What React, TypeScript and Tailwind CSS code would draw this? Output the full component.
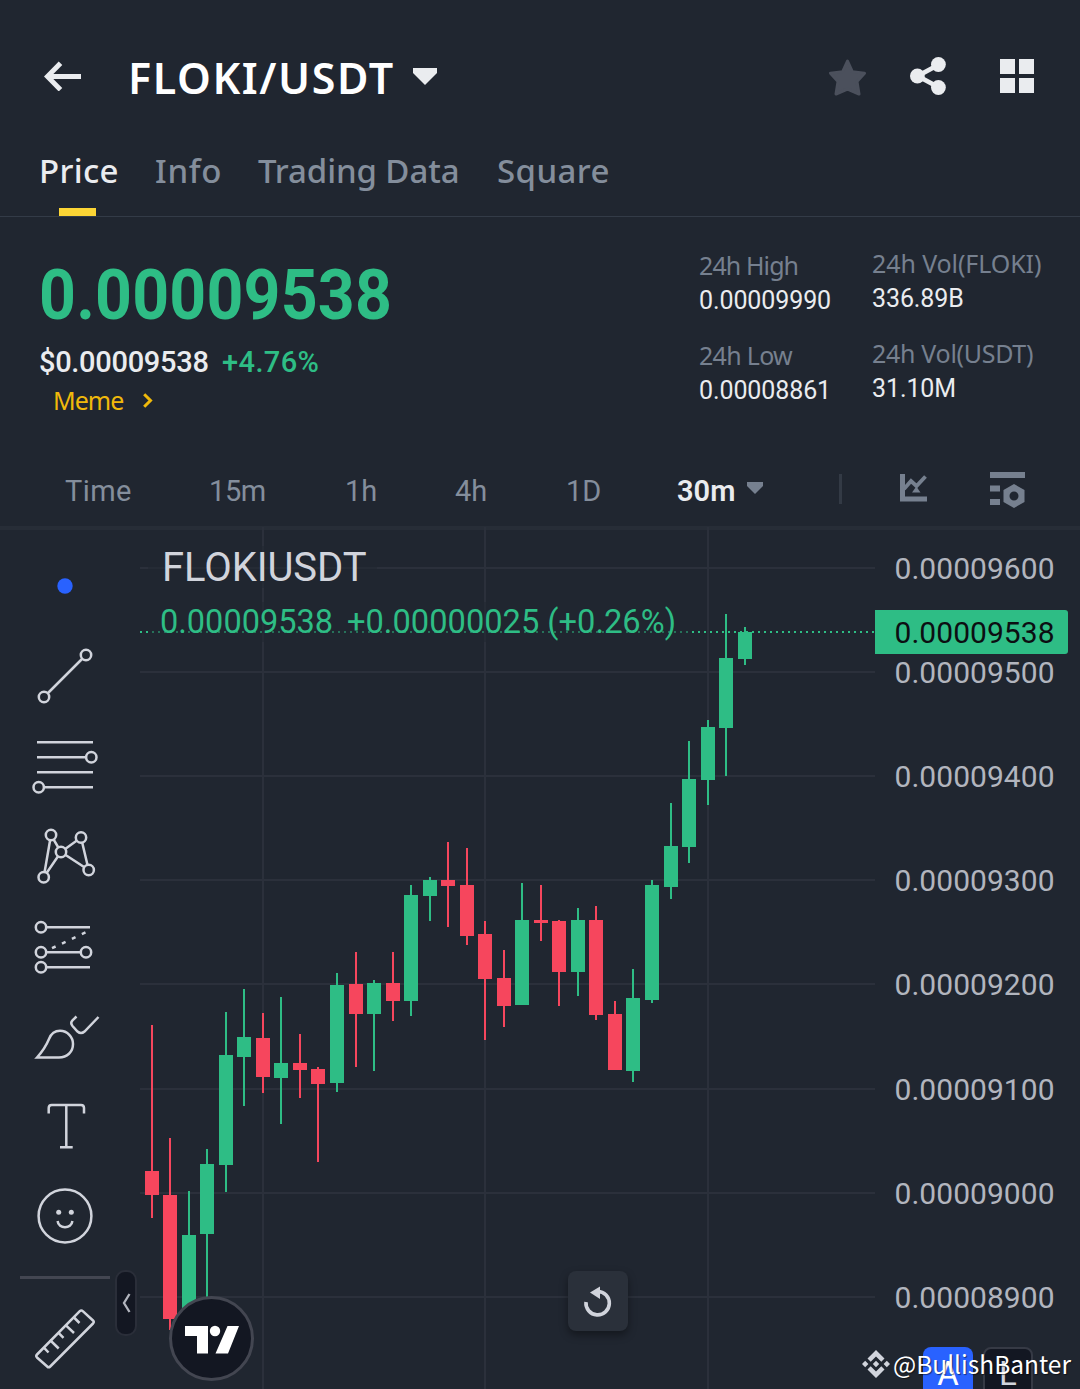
import type { ReactNode } from 'react';
import clsx from 'clsx';

type Candle = {
    x: number;
    open: number;
    close: number;
    high: number;
    low: number;
    up: boolean;
};

const UP = '#2ebd85';
const DOWN = '#f6465d';
const CHART_TOP = 530;

// x, body top, body bottom, wick top, wick bottom, rising
const rows: [number, number, number, number, number, boolean][] = [
    [145, 1171, 1195, 1025, 1218, false],
    [163, 1195, 1319, 1138, 1330, false],
    [182, 1235, 1330, 1191, 1340, true],
    [200, 1164, 1234, 1149, 1300, true],
    [219, 1055, 1165, 1012, 1192, true],
    [237, 1037, 1057, 989, 1106, true],
    [256, 1038, 1077, 1013, 1093, false],
    [274, 1063, 1078, 997, 1124, true],
    [293, 1063, 1070, 1034, 1098, false],
    [311, 1069, 1084, 1067, 1162, false],
    [330, 985, 1083, 973, 1092, true],
    [349, 984, 1014, 952, 1067, false],
    [367, 983, 1014, 980, 1071, true],
    [386, 983, 1001, 952, 1021, false],
    [404, 895, 1001, 885, 1016, true],
    [423, 880, 896, 877, 921, true],
    [441, 880, 886, 842, 927, false],
    [460, 885, 936, 848, 945, false],
    [478, 934, 979, 921, 1040, false],
    [497, 978, 1006, 950, 1027, false],
    [515, 920, 1005, 883, 1005, true],
    [534, 920, 923, 885, 941, false],
    [552, 921, 972, 920, 1006, false],
    [571, 920, 972, 908, 996, true],
    [589, 920, 1015, 906, 1020, false],
    [608, 1014, 1070, 1001, 1070, false],
    [626, 998, 1071, 969, 1082, true],
    [645, 885, 1000, 880, 1003, true],
    [664, 846, 887, 803, 899, true],
    [682, 779, 847, 741, 863, true],
    [701, 727, 780, 720, 805, true],
    [719, 658, 728, 614, 776, true],
    [738, 632, 659, 627, 665, true],
];

const candles: Candle[] = rows.map(([x, open, close, high, low, up]) => ({ x, open, close, high, low, up }));

const priceLevels = [
    { y: 568, label: '0.00009600' },
    { y: 672, label: '0.00009500' },
    { y: 776, label: '0.00009400' },
    { y: 880, label: '0.00009300' },
    { y: 984, label: '0.00009200' },
    { y: 1089, label: '0.00009100' },
    { y: 1193, label: '0.00009000' },
    { y: 1297, label: '0.00008900' },
];

const tabs = [
    { name: 'Price', className: 'w-[116px] tracking-[0.3px]' },
    { name: 'Info', className: 'w-[103px] tracking-[0.7px]' },
    { name: 'Trading Data', className: 'w-[239px] tracking-[-0.1px]' },
    { name: 'Square', className: 'w-[120px] tracking-[0.4px]' },
];

const intervals = [
    { name: 'Time', className: 'w-[144px] tracking-[0.4px]' },
    { name: '15m', className: 'w-[136px] tracking-[-0.4px]' },
    { name: '1h', className: 'w-[110px]' },
    { name: '4h', className: 'w-[111px]' },
    { name: '1D', className: 'w-[110px]' },
];

function Stat({ label, value, className }: { label: string; value: string; className: string }) {
    return (
        <div className="flex h-[90px] flex-col whitespace-nowrap">
            <span className={clsx("font-['Noto_Sans'] text-[25px] leading-[34px] text-[#76808f]", className)}>{label}</span>
            <span className="pt-[2px] font-['Roboto'] text-[25px] leading-[34px] tracking-[-0.1px] text-[#eaecef]">{value}</span>
        </div>
    );
}

function Tool({ children }: { children: ReactNode }) {
    return (
        <svg className="size-[90px] shrink-0" viewBox="0 0 90 90" fill="none" stroke="#d1d4dc" strokeWidth="2.5">
            {children}
        </svg>
    );
}

function Knobs({ points }: { points: [number, number][] }) {
    return (
        <>
            {points.map(([cx, cy]) => (
                <circle key={`${cx}-${cy}`} cx={cx} cy={cy} r="5.2" fill="#202630" />
            ))}
        </>
    );
}

function Header() {
    return (
        <header className="flex h-[152px] items-center pl-[44px] pr-[46px]">
            <svg className="h-[30px] w-[37px]" viewBox="0 0 37 30" fill="none" stroke="#eaecef" strokeWidth="5">
                <path d="M37 15.5H4M16.5 2.3 3.4 15.5 16.5 28.7" />
            </svg>
            <h1 className="ml-[47px] mt-[2px] w-[285px] whitespace-nowrap font-['Noto_Sans'] text-[43px] font-semibold leading-none tracking-[1.6px] text-white">
                FLOKI/USDT
            </h1>
            <svg className="h-[17px] w-6" viewBox="0 0 24 17" fill="#eaecef">
                <path d="M0 0H24V5L12 17 0 5Z" />
            </svg>
            <div className="ml-auto flex items-center">
                <svg className="mt-[2px] h-[39px] w-[38px]" viewBox="0 0 38 39" fill="#4b505c" stroke="#4b505c" strokeWidth="3" strokeLinejoin="round">
                    <path d="M18.500 3 23.300 13.700 35.500 15.200 28 23.500 30 36 18.500 31 7 36 9 23.500 1.500 15.200 13.700 13.700Z" />
                </svg>
                <svg className="ml-[43px] h-[38px] w-[37px]" viewBox="0 0 37 38" fill="#eaecef">
                    <path d="M29 7.5 7.8 19 29 30.5" fill="none" stroke="#eaecef" strokeWidth="4.8" />
                    <circle cx="28.400" cy="7.5" r="7.4" />
                    <circle cx="7.4" cy="19" r="7.4" />
                    <circle cx="28.400" cy="30.5" r="7.4" />
                </svg>
                <div className="ml-[53px] grid grid-cols-2 gap-1">
                    <i className="size-[15px] bg-[#eaecef]" />
                    <i className="size-[15px] bg-[#eaecef]" />
                    <i className="size-[15px] bg-[#eaecef]" />
                    <i className="size-[15px] bg-[#eaecef]" />
                </div>
            </div>
        </header>
    );
}

function Tabs() {
    return (
        <nav className="flex h-[65px] border-b border-[#333b47] pl-[39px] font-['Noto_Sans'] text-[33px] font-medium leading-[37px]">
            {tabs.map((tab, index) => (
                <div
                    key={tab.name}
                    className={clsx('flex flex-col justify-between whitespace-nowrap', tab.className, index === 0 ? 'text-[#eaecef]' : 'text-[#848e9c]')}
                >
                    {tab.name}
                    {index === 0 && <span className="ml-5 h-[8px] w-[37px] bg-[#fcd535]" />}
                </div>
            ))}
        </nav>
    );
}

function Summary() {
    return (
        <section className="flex h-[238px] pl-[39px]">
            <div className="w-[660px] pt-[40px]">
                <p className="origin-left scale-x-[0.92] whitespace-nowrap font-['Roboto'] text-[70px] font-bold leading-[76px] tracking-[0.2px] text-[#2ebd85]">
                    0.00009538
                </p>
                <p className="mt-[11px] flex font-['Roboto'] text-[29px] font-medium leading-[36px]">
                    <span className="w-[183px] tracking-[-0.3px] text-[#eaecef]">$0.00009538</span>
                    <span className="tracking-[0.4px] text-[#2ebd85]">+4.76%</span>
                </p>
                <p className="ml-[14px] mt-px flex items-center font-['Noto_Sans'] text-[25px] leading-[38px] text-[#f0b90b]">
                    <span className="w-[90px] tracking-[-1px]">Meme</span>
                    <svg className="h-[15px] w-[10px]" viewBox="0 0 10 15" fill="none" stroke="#f0b90b" strokeWidth="3">
                        <path d="M1.2 1.2 7.5 7.5 1.2 13.8" />
                    </svg>
                </p>
            </div>
            <div className="w-[173px] pt-[31px]">
                <Stat label="24h High" value="0.00009990" className="tracking-[-0.9px]" />
                <Stat label="24h Low" value="0.00008861" className="tracking-[-0.7px]" />
            </div>
            <div className="pt-[29px]">
                <Stat label="24h Vol(FLOKI)" value="336.89B" className="tracking-[-0.1px]" />
                <Stat label="24h Vol(USDT)" value="31.10M" className="tracking-[-0.3px]" />
            </div>
        </section>
    );
}

function Intervals() {
    return (
        <div className="flex h-[75px] items-center border-b-4 border-[#272d37] pl-[65px] font-['Roboto'] text-[29px] text-[#848e9c]">
            {intervals.map((item) => (
                <span key={item.name} className={clsx('pt-[2px]', item.className)}>
                    {item.name}
                </span>
            ))}
            <span className="w-[71px] pl-px pt-[2px] font-semibold text-[#eaecef]">30m</span>
            <svg className="-mt-[6px] h-[12px] w-4" viewBox="0 0 16 12" fill="#76808f">
                <path d="M0 0H16V4L8 12 0 4Z" />
            </svg>
            <i className="-mt-[4px] ml-[76px] h-[30px] w-[3px] bg-[#333a45]" />
            <svg className="-mt-[6px] ml-[58px] h-[28px] w-[28px]" viewBox="0 0 28 28" fill="none" stroke="#76808f">
                <path d="M2.5 0V25H27" strokeWidth="5" />
                <path d="M4 15 11 7 16.5 12 25.5 2.5" strokeWidth="3.8" />
                <path d="M16.3 12.500 20.5 18.5H12Z" fill="#76808f" stroke="none" />
            </svg>
            <svg className="-mt-[2px] ml-[62px] h-[36px] w-[35px]" viewBox="0 0 35 36" fill="#76808f">
                <path d="M0 0H35V6H0ZM0 13.5H10V19.5H0ZM0 27H10V33H0Z" />
                <path
                    fillRule="evenodd"
                    d="M24 12 34.5 18V30L24 36 13.5 30V18ZM24 19.5A4.5 4.5 0 1 0 24 28.5 4.5 4.5 0 1 0 24 19.5Z"
                />
            </svg>
        </div>
    );
}

function Toolbar() {
    return (
        <aside className="flex w-[140px] shrink-0 flex-col pl-5 pt-[11px]">
            <Tool>
                <circle cx="45" cy="45" r="7.7" fill="#2962ff" stroke="none" />
            </Tool>
            <Tool>
                <path d="M24 66 66 24" />
                <Knobs points={[[66, 24], [24, 66]]} />
            </Tool>
            <Tool>
                <path d="M17 21.3H73M17 36.3H73M17 51.3H73M19 66.3H73" />
                <Knobs points={[[71.3, 36.3], [18.7, 66.3]]} />
            </Tool>
            <Tool>
                <path d="M31 24 23.7 66.3 41 41ZM41 41 61 26.5 68.7 59Z" />
                <Knobs points={[[31, 24], [61, 26.5], [41, 41], [23.7, 66.3], [68.7, 59]]} />
            </Tool>
            <Tool>
                <path d="M21 26.3H70M21 51.3H66M21 66.3H70" />
                <path d="M32 47.2 66 31.2" strokeDasharray="4 7" />
                <Knobs points={[[21, 26.3], [21, 51.3], [66, 51.3], [21, 66.3]]} />
            </Tool>
            <Tool>
                <path d="M17 66.5C22 61 26.5 54 29 48 31 43 35 39.8 40 39.8 47.5 39.8 53 46 53 53 53 61 47 66.5 39 66.5Z" />
                <path d="M56.5 25.5 52.5 29.3Q50 32 52.5 35L57.5 40.5Q61 43.5 64.5 40.5L78.5 26" />
            </Tool>
            <Tool>
                <path d="M28.7 32.5V27Q28.7 24 31.7 24H61Q64 24 64 27V32.5M46.3 24V66.3M40 66.3H52.7" />
            </Tool>
            <Tool>
                <circle cx="45" cy="45" r="26.4" />
                <circle cx="38.7" cy="41.3" r="2.5" fill="#d1d4dc" stroke="none" />
                <circle cx="51.3" cy="41.3" r="2.5" fill="#d1d4dc" stroke="none" />
                <path d="M37.6 50C38.5 58.3 51.5 58.3 52.4 50" />
            </Tool>
            <i className="mt-[15px] h-[3px] w-[90px] shrink-0 bg-[#434651]" />
            <div className="mt-[15px]">
                <Tool>
                    <path d="M17 60.5 59.8 17.2Q61.3 15.7 62.8 17.2L73 26.5Q74.5 28 73 29.5L30.2 72.5Q28.7 74 27.2 72.5L17 63.5Q15.5 62 17 60.5Z" />
                    <path d="M23.7 53.3 28.5 58.5M30 46 38.7 54.5M38.3 38.7 43.5 43.9M45.7 31.2 54 39M54 23.5 59.5 29" />
                </Tool>
            </div>
        </aside>
    );
}

function Chart() {
    return (
        <svg className="absolute inset-0 -mt-[3px] h-[862px] w-[1080px]" viewBox={`0 ${CHART_TOP - 3} 1080 862`} fontFamily="Roboto, sans-serif">
            {priceLevels.map((level) => (
                <g key={level.y}>
                    <rect x="140" y={level.y - 1} width="735" height="2" fill="#2b303b" />
                    <text x="894.5" y={level.y + 11} fontSize="30" fill="#b2b5be" textLength="160">
                        {level.label}
                    </text>
                </g>
            ))}
            {[262, 484, 707].map((x) => (
                <rect key={x} x={x} y="527" width="2" height="862" fill="#2b303b" />
            ))}
            <path d="M140 632H875" stroke={UP} strokeWidth="2" strokeDasharray="2 4" />
            <rect x="148" y="546" width="229" height="42" fill="#202630" opacity="0.5" />
            <rect x="148" y="602" width="542" height="40" fill="#202630" opacity="0.5" />
            {candles.map((c) => (
                <g key={c.x} fill={c.up ? UP : DOWN}>
                    <rect x={c.x} y={c.open} width="14" height={c.close - c.open} />
                    <rect x={c.x + 6} y={c.high} width="2" height={c.low - c.high} />
                </g>
            ))}
            <text x="162" y="581" fontSize="40" fill="#d1d4dc" textLength="204.5">
                FLOKIUSDT
            </text>
            <g fontSize="33" fill={UP}>
                <text x="160" y="632.5" textLength="173" lengthAdjust="spacingAndGlyphs">0.00009538</text>
                <text x="347" y="632.5" textLength="329" lengthAdjust="spacingAndGlyphs">+0.00000025 (+0.26%)</text>
            </g>
            <path d="M875 610H1065Q1068 610 1068 613V651Q1068 654 1065 654H875Z" fill={UP} />
            <text x="894.5" y="643" fontSize="30" fill="#0c0e12" textLength="160">
                0.00009538
            </text>
        </svg>
    );
}

function Overlays() {
    return (
        <>
            <div className="absolute left-[115px] top-[740px] h-[66px] w-[22px] rounded-[10px] border-2 border-[#2a2e39] bg-[#131722]">
                <svg className="ml-[5px] mt-[21px] h-[20px] w-[9px]" viewBox="0 0 9 20" fill="none" stroke="#b2b5be" strokeWidth="2.3">
                    <path d="M7.500 1 2 10 7.500 19" />
                </svg>
            </div>
            <svg className="absolute left-[169px] top-[766px] size-[85px]" viewBox="0 0 85 85">
                <circle cx="42.5" cy="42.5" r="41" fill="#131722" stroke="#434651" strokeWidth="3" />
                <g fill="#fff">
                    <path d="M16 30H39V57.500H28V40H16ZM58.500 30H70L59 57.500H46.500Z" />
                    <circle cx="46" cy="35" r="5.2" />
                </g>
            </svg>
            <button className="absolute left-[568px] top-[741px] size-[60px] rounded-lg bg-[#2a303a] shadow-[0_4px_8px_rgba(0,0,0,0.4)]">
                <svg className="size-full" viewBox="0 0 60 60">
                    <path d="M18 31A11.7 11.7 0 1 0 29.7 20.5" fill="none" stroke="#d1d4dc" strokeWidth="3.6" />
                    <path d="M22 21.5 32 15.5V28Z" fill="#d1d4dc" />
                </svg>
            </button>
            <div className="absolute right-[47px] top-[817px] flex gap-[10px] font-['Roboto'] text-[33px] leading-[54px] text-[#d1d4dc]">
                <span className="h-[60px] w-[50px] rounded-lg bg-[#2962ff] text-center text-white">A</span>
                <span className="h-[60px] w-[50px] rounded-lg border-2 border-[#363a45] bg-[#131722] text-center leading-[50px]">L</span>
            </div>
            <div className="absolute left-[862px] top-[816px] flex items-center">
                <svg className="h-[28px] w-[28px]" viewBox="0 0 28 28" fill="#d1d4dc">
                    <path d="M14 0 22.5 8.5 19.3 11.7 14 6.4 8.7 11.7 5.5 8.5ZM14 28 22.5 19.5 19.3 16.3 14 21.6 8.7 16.3 5.5 19.5ZM14 10.8 17.2 14 14 17.2 10.8 14ZM3.2 10.8 6.4 14 3.2 17.2 0 14ZM24.8 10.8 28 14 24.8 17.2 21.6 14Z" />
                </svg>
                <span className="ml-[3px] whitespace-nowrap font-['Noto_Sans_CJK_SC'] text-[24.5px] leading-[36px] text-white [text-shadow:1px_1px_1px_rgba(0,0,0,0.5)]">
                    @BullishBanter
                </span>
            </div>
        </>
    );
}

export default function App() {
    return (
        <main className="flex h-[1389px] w-[1080px] flex-col overflow-hidden bg-[#202630]">
            <Header />
            <Tabs />
            <Summary />
            <Intervals />
            <section className="relative flex h-[859px]">
                <Chart />
                <Toolbar />
                <Overlays />
            </section>
        </main>
    );
}
